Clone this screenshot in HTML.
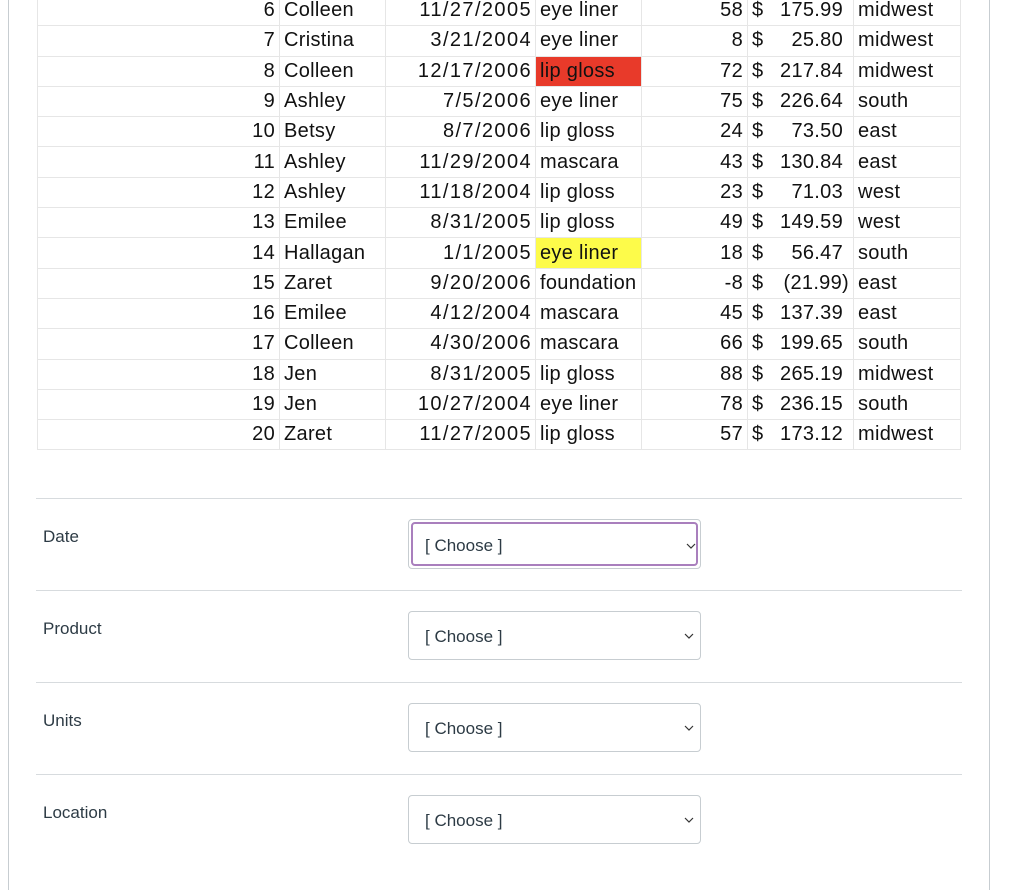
<!DOCTYPE html>
<html><head><style>
body{margin:0;width:1024px;height:890px;overflow:hidden;background:#fff;position:relative;font-family:"Liberation Sans",sans-serif}
.lb{position:absolute;left:8px;top:0;width:1px;height:890px;background:#c7cdd1}
.rb{position:absolute;left:989px;top:0;width:1px;height:890px;background:#c7cdd1}
table{position:absolute;left:37px;top:-5px;border-collapse:collapse;table-layout:fixed;font-size:20px;letter-spacing:0.3px;color:#111}
td{height:29.3px;padding:0 4px;border:1px solid #e6e6e6;white-space:nowrap;line-height:29px;overflow:hidden}
.r{text-align:right}
.d{text-align:right;letter-spacing:1.4px;padding-right:3px}
.m span{float:right;padding-right:6px}
.hr{position:absolute;left:36px;width:926px;height:1px;background:#d7dbde}
.lab{position:absolute;left:43px;font-size:17px;color:#2d3b45}
.sel{position:absolute;left:408px;width:291px;height:47px;border:1px solid #c7cdd1;border-radius:4px;font-size:17px;color:#2d3b45;box-sizing:content-box}
.sel span{position:absolute;left:16px;top:15px}
.sel svg{position:absolute;right:6px;top:21px}
</style></head><body>
<div class="lb"></div><div class="rb"></div>
<table>
<colgroup><col style="width:242px"><col style="width:106px"><col style="width:150px"><col style="width:106px"><col style="width:106px"><col style="width:106px"><col style="width:107px"></colgroup>
<tr><td class="r">6</td><td>Colleen</td><td class="d">11/27/2005</td><td>eye liner</td><td class="r">58</td><td class="m">$<span>175.99</span></td><td>midwest</td></tr>
<tr><td class="r">7</td><td>Cristina</td><td class="d">3/21/2004</td><td>eye liner</td><td class="r">8</td><td class="m">$<span>25.80</span></td><td>midwest</td></tr>
<tr><td class="r">8</td><td>Colleen</td><td class="d">12/17/2006</td><td style="background:#e83a2a">lip gloss</td><td class="r">72</td><td class="m">$<span>217.84</span></td><td>midwest</td></tr>
<tr><td class="r">9</td><td>Ashley</td><td class="d">7/5/2006</td><td>eye liner</td><td class="r">75</td><td class="m">$<span>226.64</span></td><td>south</td></tr>
<tr><td class="r">10</td><td>Betsy</td><td class="d">8/7/2006</td><td>lip gloss</td><td class="r">24</td><td class="m">$<span>73.50</span></td><td>east</td></tr>
<tr><td class="r">11</td><td>Ashley</td><td class="d">11/29/2004</td><td>mascara</td><td class="r">43</td><td class="m">$<span>130.84</span></td><td>east</td></tr>
<tr><td class="r">12</td><td>Ashley</td><td class="d">11/18/2004</td><td>lip gloss</td><td class="r">23</td><td class="m">$<span>71.03</span></td><td>west</td></tr>
<tr><td class="r">13</td><td>Emilee</td><td class="d">8/31/2005</td><td>lip gloss</td><td class="r">49</td><td class="m">$<span>149.59</span></td><td>west</td></tr>
<tr><td class="r">14</td><td>Hallagan</td><td class="d">1/1/2005</td><td style="background:#fdfb4a">eye liner</td><td class="r">18</td><td class="m">$<span>56.47</span></td><td>south</td></tr>
<tr><td class="r">15</td><td>Zaret</td><td class="d">9/20/2006</td><td>foundation</td><td class="r">-8</td><td class="m">$<span style="padding-right:0">(21.99)</span></td><td>east</td></tr>
<tr><td class="r">16</td><td>Emilee</td><td class="d">4/12/2004</td><td>mascara</td><td class="r">45</td><td class="m">$<span>137.39</span></td><td>east</td></tr>
<tr><td class="r">17</td><td>Colleen</td><td class="d">4/30/2006</td><td>mascara</td><td class="r">66</td><td class="m">$<span>199.65</span></td><td>south</td></tr>
<tr><td class="r">18</td><td>Jen</td><td class="d">8/31/2005</td><td>lip gloss</td><td class="r">88</td><td class="m">$<span>265.19</span></td><td>midwest</td></tr>
<tr><td class="r">19</td><td>Jen</td><td class="d">10/27/2004</td><td>eye liner</td><td class="r">78</td><td class="m">$<span>236.15</span></td><td>south</td></tr>
<tr><td class="r">20</td><td>Zaret</td><td class="d">11/27/2005</td><td>lip gloss</td><td class="r">57</td><td class="m">$<span>173.12</span></td><td>midwest</td></tr>
</table>

<div class="hr" style="top:498px"></div>
<div class="hr" style="top:590px"></div>
<div class="hr" style="top:682px"></div>
<div class="hr" style="top:774px"></div>

<div class="lab" style="top:527px">Date</div>
<div class="lab" style="top:619px">Product</div>
<div class="lab" style="top:711px">Units</div>
<div class="lab" style="top:803px">Location</div>

<div class="sel" style="top:519px;height:48px"><div style="position:absolute;left:2px;top:2px;right:2px;bottom:2px;border:2px solid #a97fbd;border-radius:4px"></div><span style="top:16px">[ Choose ]</span><svg width="10" height="6" viewBox="0 0 10 6" style="top:23px;right:4px"><path d="M1 1L5 5L9 1" fill="none" stroke="#333" stroke-width="1.2"/></svg></div>
<div class="sel" style="top:611px"><span>[ Choose ]</span><svg width="10" height="6" viewBox="0 0 10 6"><path d="M1 1L5 5L9 1" fill="none" stroke="#333" stroke-width="1.2"/></svg></div>
<div class="sel" style="top:703px"><span>[ Choose ]</span><svg width="10" height="6" viewBox="0 0 10 6"><path d="M1 1L5 5L9 1" fill="none" stroke="#333" stroke-width="1.2"/></svg></div>
<div class="sel" style="top:795px"><span>[ Choose ]</span><svg width="10" height="6" viewBox="0 0 10 6"><path d="M1 1L5 5L9 1" fill="none" stroke="#333" stroke-width="1.2"/></svg></div>
</body></html>
